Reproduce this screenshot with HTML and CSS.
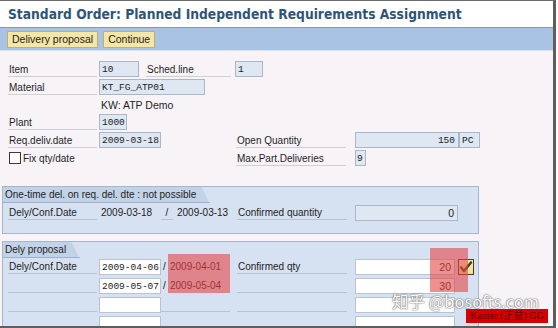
FILE: index.html
```html
<!DOCTYPE html>
<html lang="en">
<head>
    <meta charset="UTF-8">
    <title>Standard Order: Planned Independent Requirements Assignment</title>
    <link rel="stylesheet" href="styles.css">
</head>
<body>
<div class="window">
    <div class="title">Standard Order: Planned Independent Requirements Assignment</div>

    <div class="toolbar">
        <button class="tb-btn">Delivery proposal</button>
        <button class="tb-btn">Continue</button>
    </div>

    <div class="screen">
        <div class="row">
            <span class="lbl">Item</span>
            <span class="fld w40">10</span>
            <span class="lbl lbl-mid">Sched.line</span>
            <span class="fld w28">1</span>
        </div>
        <div class="row">
            <span class="lbl">Material</span>
            <span class="fld w106">KT_FG_ATP01</span>
        </div>
        <div class="row text-row">
            <span class="desc">KW: ATP Demo</span>
        </div>
        <div class="row">
            <span class="lbl">Plant</span>
            <span class="fld w28">1000</span>
        </div>
        <div class="row">
            <span class="lbl">Req.deliv.date</span>
            <span class="fld w62">2009-03-18</span>
            <span class="lbl lbl-right lbl-open">Open Quantity</span>
            <span class="fld w104 num">150</span>
            <span class="fld w21">PC</span>
        </div>
        <div class="row">
            <span class="check-lbl"><span class="checkbox"></span>Fix qty/date</span>
            <span class="lbl lbl-right">Max.Part.Deliveries</span>
            <span class="fld w11">9</span>
        </div>

        <div class="group group-one">
            <div class="group-head"><span>One-time del. on req. del. dte : not possible</span></div>
            <div class="grp-row">
                <span class="lbl">Dely/Conf.Date</span>
                <span class="out">2009-03-18</span>
                <span class="slash slash-wide">/</span>
                <span class="out">2009-03-13</span>
                <span class="lbl lbl-conf">Confirmed quantity</span>
                <span class="fld w103 num prop">0</span>
            </div>
        </div>

        <div class="group group-two">
            <div class="group-head"><span>Dely proposal</span></div>
            <div class="grp-row">
                <span class="lbl">Dely/Conf.Date</span>
                <span class="inp w62">2009-04-06</span>
                <span class="slash">/</span>
                <span class="out hl">2009-04-01</span>
                <span class="lbl lbl-conf">Confirmed qty</span>
                <span class="inp w100 num prop">20</span>
                <span class="ok-icon">
                    <svg width="14" height="14" viewBox="0 0 14 14">
                        <path d="M2 7.5 L5 11 L12 2.5" fill="none" stroke="#3f4a10" stroke-width="2.6" stroke-linecap="round" stroke-linejoin="round"/>
                    </svg>
                </span>
            </div>
            <div class="grp-row">
                <span class="lbl"></span>
                <span class="inp w62">2009-05-07</span>
                <span class="slash">/</span>
                <span class="out hl">2009-05-04</span>
                <span class="lbl lbl-conf"></span>
                <span class="inp w100 num prop">30</span>
            </div>
            <div class="grp-row">
                <span class="lbl"></span>
                <span class="inp w62"></span>
                <span class="blank-line"></span>
                <span class="lbl lbl-conf"></span>
                <span class="inp w100"></span>
            </div>
            <div class="grp-row">
                <span class="lbl"></span>
                <span class="inp w62"></span>
                <span class="blank-line"></span>
                <span class="lbl lbl-conf"></span>
                <span class="inp w100"></span>
            </div>
        </div>

        <div class="mark mark-date"></div>
        <div class="mark mark-qty"></div>
        <div class="watermark">知乎 @bosofts.com</div>
        <div class="stamp">Kanter (正益) GG</div>
    </div>
</div>
</body>
</html>
```

FILE: styles.css
```css
body {
    margin: 0;
    padding: 0;
    background-color: #ffffff;
    font-family: "Liberation Sans", Arial, sans-serif;
    font-size: 10px;
    color: #1e1e1e;
}

.window {
    width: 553px;
    height: 325px;
    border-top: 1px solid #6c6c6c;
    border-right: 3px solid #5e5e5e;
    border-bottom: 2px solid #5e5e5e;
    overflow: hidden;
    background-color: #f7f3f7;
}

.title {
    height: 26px;
    line-height: 27px;
    padding-left: 8px;
    background-color: #ffffff;
    border-bottom: 1px solid #8a98a8;
    font-family: "DejaVu Sans Condensed", "DejaVu Sans", sans-serif;
    font-weight: bold;
    font-size: 13.7px;
    color: #2f5576;
    white-space: nowrap;
}

.toolbar {
    height: 22px;
    background-color: #a8c3e3;
    border-bottom: 1px solid #d8e2ee;
    display: flex;
    align-items: center;
    gap: 5px;
    padding-left: 7px;
}

.tb-btn {
    height: 17px;
    padding: 0 4px;
    border: 1px solid #c2ae6e;
    background-color: #f6e6a6;
    font-family: "Liberation Sans", Arial, sans-serif;
    font-size: 10.5px;
    color: #222;
}

.screen {
    position: relative;
    padding-top: 10px;
}

.row {
    display: flex;
    align-items: center;
    height: 16px;
    margin-bottom: 2px;
    padding-left: 8px;
}

.text-row {
    height: 16px;
    margin-bottom: 1px;
}

.lbl {
    width: 89px;
    height: 15px;
    line-height: 15px;
    margin-right: 2px;
    border-bottom: 1px solid #cfcfd6;
    padding-left: 1px;
    box-sizing: border-box;
    white-space: nowrap;
    flex-shrink: 0;
}

.lbl-mid {
    width: 85px;
    margin-left: 7px;
    margin-right: 4px;
}

.lbl-right {
    width: 110px;
    margin-right: 9px;
}

.lbl-open {
    margin-left: 75px;
}

.fld, .inp {
    height: 16px;
    line-height: 15px;
    box-sizing: border-box;
    border: 1px solid #a9b7c9;
    background-color: #dfe7f3;
    font-family: "Liberation Mono", "Courier New", monospace;
    font-size: 9.5px;
    padding: 0 1px 0 2px;
    color: #1c1c1c;
    white-space: nowrap;
    overflow: hidden;
    flex-shrink: 0;
}

.inp {
    background-color: #ffffff;
    border-color: #b9c4d2;
}

.num {
    text-align: right;
    padding-right: 3px;
}

.prop {
    font-family: "Liberation Sans", Arial, sans-serif;
    font-size: 10.5px;
}

.w11 { width: 11px; padding: 0 1px; }
.w21 { width: 21px; }
.w28 { width: 28px; }
.w40 { width: 40px; }
.w62 { width: 62px; }
.w100 { width: 100px; }
.w103 { width: 103px; }
.w104 { width: 104px; }
.w106 { width: 106px; }

.desc {
    margin-left: 93px;
    font-size: 10.5px;
}

.check-lbl {
    display: flex;
    align-items: center;
    width: 227px;
    margin-left: 1px;
}

.checkbox {
    width: 10px;
    height: 10px;
    border: 1px solid #3a3a3a;
    background-color: #ffffff;
    margin-right: 2px;
}

.group {
    margin-left: 2px;
    width: 477px;
    box-sizing: border-box;
    background-color: #d6e1f1;
    border: 1px solid #a6b6cc;
}

.group-one {
    margin-top: 20px;
    height: 48px;
}

.group-two {
    margin-top: 7px;
    height: 92px;
}

.group-head {
    height: 15px;
    margin-bottom: 2px;
}

.group-two .group-head {
    margin-bottom: 1px;
}

.group-head span {
    display: inline-block;
    height: 15px;
    line-height: 15px;
    padding: 0 14px 0 2px;
    background: linear-gradient(65deg, #c2d3e8 0, #c2d3e8 calc(100% - 8px), transparent calc(100% - 7px));
    border-bottom: 1px solid #9fb1c8;
}

.grp-row {
    display: flex;
    align-items: center;
    height: 17px;
    margin-bottom: 2px;
    padding-left: 5px;
}

.group .lbl {
    border-bottom-color: #b7c3d3;
}

.out {
    width: 62px;
    padding-left: 2px;
    box-sizing: border-box;
    white-space: nowrap;
    flex-shrink: 0;
}

.slash {
    width: 7px;
    height: 15px;
    line-height: 15px;
    text-align: center;
    box-sizing: border-box;
    flex-shrink: 0;
}

.slash-wide {
    width: 12px;
    margin-left: 0;
    margin-right: 2px;
    border-bottom: 1px solid #b7c3d3;
}

.lbl-conf {
    width: 110px;
    margin-left: 7px;
    margin-right: 8px;
}

.group-one .lbl-conf {
    margin-left: 0;
}

.hl {
    color: #3c1010;
}

.blank-line {
    width: 69px;
    height: 15px;
    border-bottom: 1px solid #b7c3d3;
    box-sizing: border-box;
    flex-shrink: 0;
}

.ok-icon {
    display: flex;
    align-items: center;
    justify-content: center;
    width: 16px;
    height: 16px;
    margin-left: 3px;
    box-sizing: border-box;
    border: 1px solid #4a3a2a;
    background: linear-gradient(135deg, #fffbd8, #f1dc8c);
    flex-shrink: 0;
}

.mark {
    position: absolute;
    background-color: rgba(228, 70, 70, 0.6);
}

.mark-date {
    left: 168px;
    top: 203px;
    width: 62px;
    height: 39px;
}

.mark-qty {
    left: 430px;
    top: 197px;
    width: 38px;
    height: 44px;
}

.watermark {
    position: absolute;
    left: 392px;
    top: 243px;
    font-family: "Noto Sans CJK SC", "DejaVu Sans", sans-serif;
    font-size: 16.5px;
    line-height: 15px;
    color: #ffffff;
    text-shadow: 0 0 1px #555, 0 0 2px #777;
}

.stamp {
    position: absolute;
    left: 466px;
    top: 258px;
    width: 82px;
    height: 14px;
    line-height: 14px;
    background-color: #d60000;
    color: #5a0000;
    font-family: "Liberation Serif", "Noto Sans CJK SC", serif;
    font-size: 10px;
    text-align: center;
    white-space: nowrap;
    overflow: hidden;
}
```
